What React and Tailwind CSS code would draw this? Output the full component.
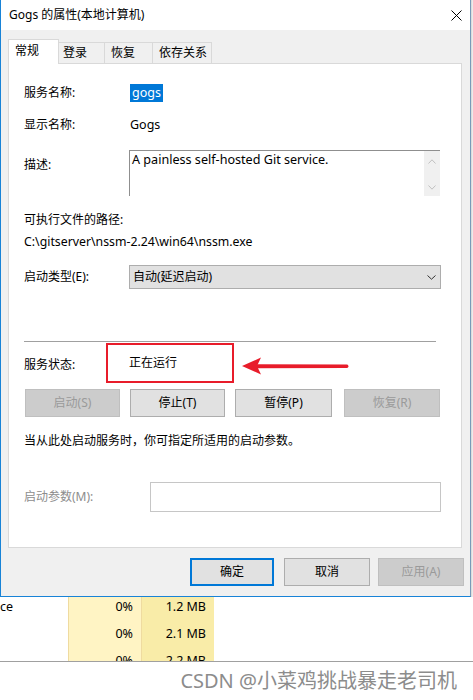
function Chevron({ className, up, color = "#c0c0c0", w = 8, h = 5 }) {
  return (
    <svg className={className} width={w} height={h} viewBox={`0 0 ${w} ${h}`} fill="none">
      <path
        d={up ? `M0.5 ${h - 0.5}L${w / 2} 0.8L${w - 0.5} ${h - 0.5}` : `M0.5 0.5L${w / 2} ${h - 0.8}L${w - 0.5} 0.5`}
        stroke={color}
        strokeWidth="1"
      />
    </svg>
  );
}

function Tabs() {
  return (
    <div className="flex h-[24px] items-end">
      <div className="relative z-10 -mb-px flex h-[25px] w-[51px] items-center border-l border-r border-t border-[#d9d9d9] bg-white pb-[2px] pl-[6px]">
        常规
      </div>
      <div className="flex h-[21px] w-[46px] items-center border-r border-t border-[#d9d9d9] pl-[4px]">登录</div>
      <div className="flex h-[21px] w-[48px] items-center border-r border-t border-[#d9d9d9] pl-[6px]">恢复</div>
      <div className="flex h-[21px] w-[59px] items-center border-r border-t border-[#d9d9d9] pl-[6px]">依存关系</div>
    </div>
  );
}

function Panel() {
  return (
    <div className="h-[485px] w-[454px] border border-[#d9d9d9] bg-white pl-[15px]">
      <div className="mt-[20px] flex h-[18px] items-center">
        <span className="w-[106px]">服务名称:</span>
        <span className="bg-[#0078d7] px-[2px] text-[12.5px] text-white">gogs</span>
      </div>
      <div className="mt-[14px] flex h-[18px] items-center">
        <span className="w-[106px]">显示名称:</span>
        <span className="text-[12.5px]">Gogs</span>
      </div>

      <div className="mt-[16px] flex h-[46px]">
        <span className="w-[105px] pt-[6px]">描述:</span>
        <div className="flex w-[311px] border-l border-t border-[#8f8f8f]">
          <div className="flex-1 pl-[2px] text-[12.6px]">A painless self-hosted Git service.</div>
          <div className="flex w-[16px] flex-col items-center bg-[#f0f0f0]">
            <Chevron className="mt-[8px]" up />
            <Chevron className="mt-[21px]" />
          </div>
        </div>
      </div>

      <div className="mt-[15px] h-[18px]">可执行文件的路径:</div>
      <div className="mt-[4px] h-[18px] text-[12.3px]">C:\gitserver\nssm-2.24\win64\nssm.exe</div>

      <div className="mt-[14px] flex h-[24px] items-center">
        <span className="w-[105px]">启动类型(E):</span>
        <div className="flex h-full w-[312px] items-center justify-between border border-[#adadad] bg-[#e1e1e1] pl-[3px] pr-[4px]">
          <span>自动(延迟启动)</span>
          <Chevron color="#333333" w={9} h={5} />
        </div>
      </div>

      <div className="mt-[52px] h-px w-[412px] bg-[#a0a0a0]" />

      <div className="mt-px flex h-[40px] items-start">
        <span className="mt-[13px] w-[82px]">服务状态:</span>
        <div className="flex h-[40px] w-[128px] items-center border-2 border-[#e81c2a] pl-[21px]">正在运行</div>
        <svg className="ml-[8px] mt-[13px]" width="108" height="20" viewBox="0 0 108 20">
          <path d="M15 8.2L105 8.5A1.8 1.8 0 0 1 105 12L15 12.2Z" fill="#e81c2a" />
          <path d="M0 10L19 1.5L15 10L19 18.5Z" fill="#e81c2a" />
        </svg>
      </div>

      <div className="mt-[6px] flex h-[28px] pl-px">
        <div className="flex h-full w-[95px] items-center justify-center border border-[#bfbfbf] bg-[#cccccc] text-[#9a9a9a]">启动(S)</div>
        <div className="ml-[10px] flex h-full w-[95px] items-center justify-center border border-[#adadad] bg-[#e1e1e1]">停止(T)</div>
        <div className="ml-[10px] flex h-full w-[97px] items-center justify-center border border-[#adadad] bg-[#e1e1e1]">暂停(P)</div>
        <div className="ml-[12px] flex h-full w-[96px] items-center justify-center border border-[#bfbfbf] bg-[#cccccc] text-[#9a9a9a]">恢复(R)</div>
      </div>

      <div className="mt-[15px] h-[18px]">当从此处启动服务时，你可指定所适用的启动参数。</div>

      <div className="mt-[32px] flex h-[30px] items-center">
        <span className="w-[126px] text-[#8d8d8d]">启动参数(M):</span>
        <div className="h-full w-[291px] border border-[#c6c6c6] bg-white" />
      </div>
    </div>
  );
}

function Dialog() {
  return (
    <div className="flex h-[597px] w-[471px] flex-col border-b border-l border-r border-b-[#1883d7] border-l-[#1883d7] border-r-[#7a9ab8]">
      <div className="flex h-[30px] shrink-0 items-center justify-between bg-white pl-[8px] pr-[8px]">
        <span>Gogs 的属性(本地计算机)</span>
        <svg width="11" height="11" viewBox="0 0 11 11">
          <path d="M0.5 0.5L10.5 10.5M10.5 0.5L0.5 10.5" stroke="#000000" strokeWidth="1" />
        </svg>
      </div>
      <div className="flex-1 bg-[#f0f0f0] pl-[7px] pt-[9px]">
        <Tabs />
        <Panel />
        <div className="ml-[182px] mt-[10px] flex h-[28px]">
          <div className="flex h-full w-[84px] items-center justify-center border-2 border-[#0078d7] bg-[#e1e1e1]">确定</div>
          <div className="ml-[10px] flex h-full w-[86px] items-center justify-center border border-[#adadad] bg-[#e1e1e1]">取消</div>
          <div className="ml-[8px] flex h-full w-[86px] items-center justify-center border border-[#bfbfbf] bg-[#cccccc] text-[#9a9a9a]">应用(A)</div>
        </div>
      </div>
    </div>
  );
}

const rows = [
  ["ce", "0%", "1.2 MB"],
  ["", "0%", "2.1 MB"],
  ["", "0%", "2.2 MB"],
];

export default function App() {
  return (
    <div className="h-[700px] w-[473px] overflow-hidden bg-white font-['Noto_Sans','Noto_Sans_CJK_SC',sans-serif] text-[12px] leading-[18px] text-black">
      <div className="flex">
        <Dialog />
        <div className="w-[2px] bg-gradient-to-r from-[#d4d4d4] to-[#f3f3f3]" />
      </div>

      <div className="flex h-[64px] overflow-hidden text-[12.5px]">
        <div className="w-[68px]">
          {rows.map((r, i) => (
            <div key={i} className="h-[27px] leading-[20px]">{r[0]}</div>
          ))}
        </div>
        <div className="w-[73px] border-l border-[#efdba0] bg-[#fff4c4] pr-[8px] text-right">
          {rows.map((r, i) => (
            <div key={i} className="h-[27px] leading-[20px]">{r[1]}</div>
          ))}
        </div>
        <div className="w-[73px] border-l border-[#efdba0] bg-[#f9eca8] pr-[8px] text-right">
          {rows.map((r, i) => (
            <div key={i} className="h-[27px] leading-[20px]">{r[2]}</div>
          ))}
        </div>
        <div className="flex-1" />
      </div>

      <div className="h-px bg-[#a0a0a0]" />
      <div className="flex h-[38px] items-center justify-end pr-[16px] text-[20px] leading-[24px] text-[#8c8c8c]">
        CSDN @小菜鸡挑战暴走老司机
      </div>
    </div>
  );
}
